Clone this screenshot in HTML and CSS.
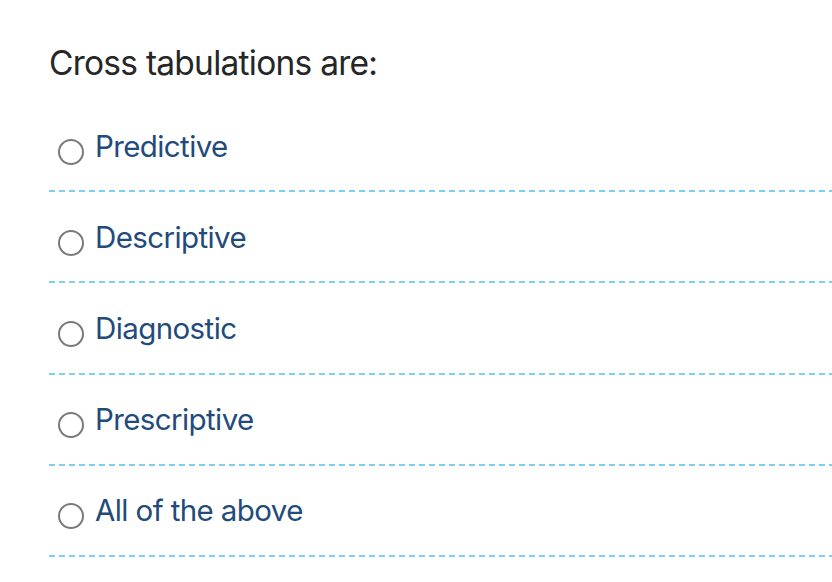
FILE: index.html
```html
<!DOCTYPE html>
<html>
<head>
<meta charset="utf-8">
<link rel="stylesheet" href="styles.css">
</head>
<body>
<div class="quiz">
  <h1 class="question">Cross tabulations are:</h1>
  <ul class="options">
    <li class="option"><span class="radio"></span><span class="label">Predictive</span></li>
    <li class="option"><span class="radio"></span><span class="label">Descriptive</span></li>
    <li class="option"><span class="radio"></span><span class="label">Diagnostic</span></li>
    <li class="option"><span class="radio"></span><span class="label">Prescriptive</span></li>
    <li class="option"><span class="radio"></span><span class="label">All of the above</span></li>
  </ul>
</div>
</body>
</html>
```
FILE: styles.css
```css
html, body {
  margin: 0;
  padding: 0;
  background: #ffffff;
}
.quiz {
  padding: 42px 0 0 49px;
  font-family: Inter, "Noto Sans", sans-serif;
}
.question {
  margin: 0;
  font-size: 33.5px;
  font-weight: 400;
  letter-spacing: -0.75px;
  color: #262626;
  line-height: 42px;
}
.options {
  list-style: none;
  margin: 17px 0 0 0;
  padding: 0;
}
.option {
  display: flex;
  align-items: center;
  gap: 11px;
  height: 89.2px;
  padding-left: 9px;
  padding-bottom: 2px;
  background-image: repeating-linear-gradient(to right, #7ecff5 0 6px, transparent 6px 10px);
  background-size: 100% 2px;
  background-repeat: no-repeat;
  background-position: left bottom;
}
.radio {
  width: 22px;
  height: 22px;
  border: 2px solid #7a7a7a;
  border-radius: 50%;
  flex: none;
  margin-top: 12px;
}
.label {
  font-size: 29.5px;
  font-weight: 400;
  color: #224a7b;
  letter-spacing: -0.6px;
  line-height: 30px;
}
```
